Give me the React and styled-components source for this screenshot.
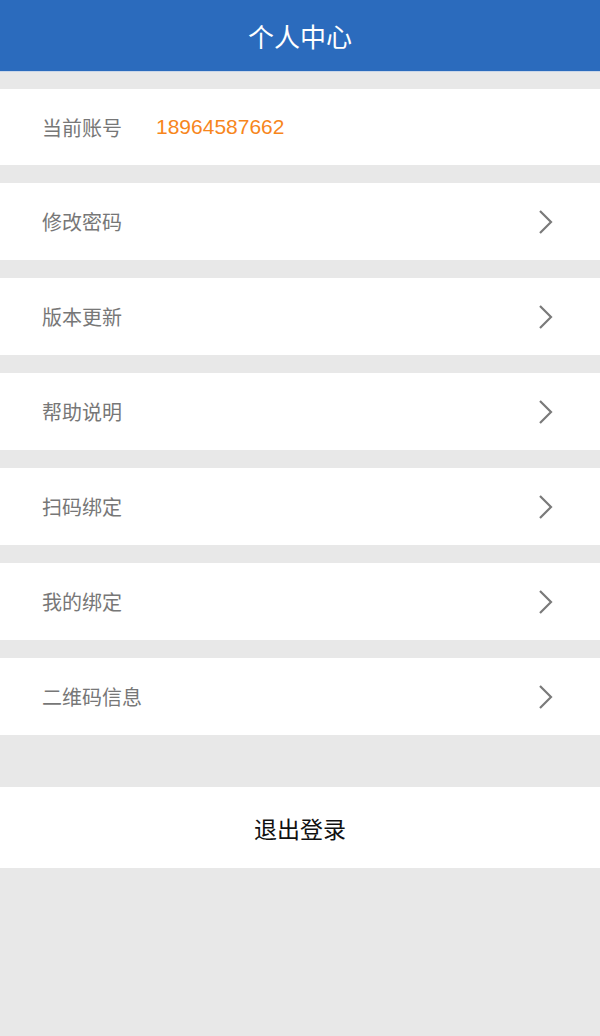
import React from "react";
import styled, { createGlobalStyle } from "styled-components";

const GlobalStyle = createGlobalStyle`
  html, body {
    margin: 0;
    padding: 0;
    background: #e8e8e8;
    font-family: "Noto Sans CJK SC", "Liberation Sans", sans-serif;
  }
`;

const menuItems = ["修改密码", "版本更新", "帮助说明", "扫码绑定", "我的绑定", "二维码信息"];

const Chevron = () => (
  <svg width="18" height="26" viewBox="0 0 18 26" fill="none">
    <path d="M3 2 L14 13 L3 24" stroke="#7a7a7a" strokeWidth="2.2" />
  </svg>
);

const App = () => {
  return (
    <Page>
      <GlobalStyle />
      <Header>个人中心</Header>
      <List>
        <AccountRow>
          <Label>当前账号</Label>
          <Phone>18964587662</Phone>
        </AccountRow>
        {menuItems.map((item) => (
          <MenuRow key={item}>
            <Label>{item}</Label>
            <Chevron />
          </MenuRow>
        ))}
      </List>
      <LogoutButton>退出登录</LogoutButton>
    </Page>
  );
};

const Page = styled.div`
  width: 600px;
  min-height: 1036px;
  background: #e8e8e8;
`;

const Header = styled.div`
  height: 72px;
  background: #2b6bbd;
  color: #fff;
  font-size: 26px;
  display: flex;
  align-items: center;
  justify-content: center;
  border-bottom: 1px solid #c9d6e8;
  box-sizing: border-box;
`;

const List = styled.div`
  display: flex;
  flex-direction: column;
  gap: 18px;
  padding-top: 17px;
`;

const AccountRow = styled.div`
  height: 76px;
  background: #fff;
  display: flex;
  align-items: center;
  gap: 34px;
  padding: 0 42px;
`;

const MenuRow = styled.div`
  height: 77px;
  background: #fff;
  display: flex;
  align-items: center;
  justify-content: space-between;
  padding: 0 45px 0 42px;
`;

const Label = styled.span`
  font-size: 20px;
  color: #777;
`;

const Phone = styled.span`
  font-family: "Liberation Sans", sans-serif;
  font-size: 21px;
  color: #f7861c;
`;

const LogoutButton = styled.div`
  margin-top: 52px;
  height: 81px;
  background: #fff;
  display: flex;
  align-items: center;
  justify-content: center;
  font-size: 23px;
  color: #111;
`;

export default App;
